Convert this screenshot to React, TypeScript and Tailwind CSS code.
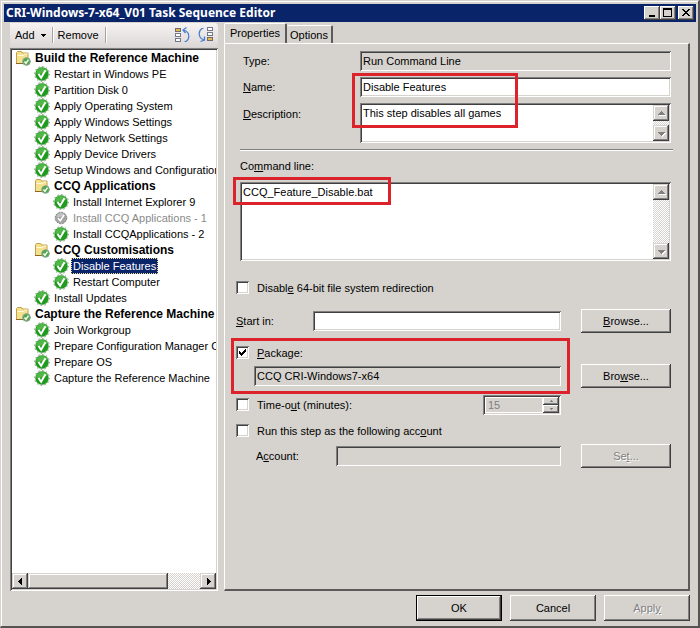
import React from "react";

const SUNKEN =
  "shadow-[inset_1px_1px_0_#808080,inset_-1px_-1px_0_#fff,inset_2px_2px_0_#404040,inset_-2px_-2px_0_#d6d3ce]";
const RAISED =
  "bg-[#d6d3ce] shadow-[inset_-1px_-1px_0_#404040,inset_1px_1px_0_#fff,inset_-2px_-2px_0_#808080]";
const SCROLL_BUTTON =
  "flex h-4 w-4 shrink-0 items-center justify-center bg-[#d6d3ce] shadow-[inset_-1px_-1px_0_#404040,inset_1px_1px_0_#d6d3ce,inset_-2px_-2px_0_#808080,inset_2px_2px_0_#fff]";
const DITHER =
  "bg-[repeating-conic-gradient(#fff_0_25%,#d6d3ce_0_50%)] bg-[length:2px_2px]";
const CAPTION_BUTTON =
  "flex h-3.5 w-4 items-center justify-center bg-[#d6d3ce] shadow-[inset_-1px_-1px_0_#404040,inset_1px_1px_0_#fff,inset_-2px_-2px_0_#808080]";

type Kind = "folder" | "ok" | "off";
type Item = { label: string; kind: Kind; depth: 0 | 1 | 2; selected?: boolean };

const ITEMS: Item[] = [
  { label: "Build the Reference Machine", kind: "folder", depth: 0 },
  { label: "Restart in Windows PE", kind: "ok", depth: 1 },
  { label: "Partition Disk 0", kind: "ok", depth: 1 },
  { label: "Apply Operating System", kind: "ok", depth: 1 },
  { label: "Apply Windows Settings", kind: "ok", depth: 1 },
  { label: "Apply Network Settings", kind: "ok", depth: 1 },
  { label: "Apply Device Drivers", kind: "ok", depth: 1 },
  { label: "Setup Windows and Configuration", kind: "ok", depth: 1 },
  { label: "CCQ Applications", kind: "folder", depth: 1 },
  { label: "Install Internet Explorer 9", kind: "ok", depth: 2 },
  { label: "Install CCQ Applications - 1", kind: "off", depth: 2 },
  { label: "Install CCQApplications - 2", kind: "ok", depth: 2 },
  { label: "CCQ Customisations", kind: "folder", depth: 1 },
  { label: "Disable Features", kind: "ok", depth: 2, selected: true },
  { label: "Restart Computer", kind: "ok", depth: 2 },
  { label: "Install Updates", kind: "ok", depth: 1 },
  { label: "Capture the Reference Machine", kind: "folder", depth: 0 },
  { label: "Join Workgroup", kind: "ok", depth: 1 },
  { label: "Prepare Configuration Manager Cli", kind: "ok", depth: 1 },
  { label: "Prepare OS", kind: "ok", depth: 1 },
  { label: "Capture the Reference Machine", kind: "ok", depth: 1 },
];

const INDENT = { 0: "pl-[3px]", 1: "pl-[22px]", 2: "pl-[41px]" };

function StatusIcon({ kind }: { kind: Kind }) {
  if (kind === "folder") {
    return (
      <svg width="16" height="16" viewBox="0 0 16 16" className="shrink-0">
        <path d="M1.500 2.500 2.500 1.500h4l1 1.500h5.500v10.500H1.500z" fill="#f5e08d" stroke="#c2a04a" />
        <path d="M2.500 5.500h6l1-1.500h3" stroke="#fffbdc" fill="none" />
        <path d="M1 13.500h12" stroke="#8a6a22" />
        <circle cx="11.500" cy="11.500" r="3.800" fill="#4fa84c" stroke="#8aa18a" />
        <path d="m9.500 11.500 1.500 1.800 2.500-3.600" stroke="#fff" strokeWidth="1.400" fill="none" />
      </svg>
    );
  }
  if (kind === "off") {
    return (
      <svg width="16" height="16" viewBox="0 0 16 16" className="shrink-0">
        <circle cx="8" cy="8" r="5.800" fill="#a3a3a3" stroke="#858585" strokeDasharray="2 1" />
        <path d="M3.500 7a4.600 4.600 0 0 1 8.500-1.500C9.500 5.500 6 8 3.500 7z" fill="#c4c4c4" />
        <path d="m5 8.200 2.300 2.600L11 5" stroke="#fff" strokeWidth="1.600" fill="none" />
      </svg>
    );
  }
  return (
    <svg width="16" height="16" viewBox="0 0 16 16" className="shrink-0">
      <circle cx="8" cy="8" r="7.500" fill="#e6efe5" stroke="#7d8a7d" strokeDasharray="1.300 2.627" />
      <circle cx="8" cy="8" r="6.700" fill="#219a20" />
      <path d="M2.300 7.500a5.800 5.800 0 0 1 11.200-1.800C10 5.500 6 9.500 2.300 7.500z" fill="#4fb848" />
      <path d="M4.500 8 7.100 11.700 11.500 4.200" stroke="#fff" strokeWidth="2" fill="none" />
    </svg>
  );
}

function Arrow({ dir, color = "#808080" }: { dir: "up" | "down" | "left" | "right"; color?: string }) {
  const shape = {
    up: "M4 2h1v1h1v1h1v1h1v1H1V5h1V4h1V3h1z",
    down: "M1 3h7v1H7v1H6v1H5v1H4V6H3V5H2V4H1z",
    left: "M6 1v7H5V7H4V6H3V5H2V4h1V3h1V2h1V1z",
    right: "M3 1v7h1V7h1V6h1V5h1V4H6V3H5V2H4V1z",
  }[dir];
  return (
    <svg width="9" height="9" viewBox="0 0 9 9" shapeRendering="crispEdges" className="overflow-visible">
      {color === "#808080" && <path d={shape} fill="#fff" transform="translate(1 1)" />}
      <path d={shape} fill={color} />
    </svg>
  );
}

function VScroll({ name }: { name: string }) {
  return (
    <div className={`flex w-4 shrink-0 flex-col justify-between ${DITHER}`}>
      <button type="button" aria-label={`Scroll ${name} up`} className={SCROLL_BUTTON}>
        <Arrow dir="up" />
      </button>
      <button type="button" aria-label={`Scroll ${name} down`} className={SCROLL_BUTTON}>
        <Arrow dir="down" />
      </button>
    </div>
  );
}

function Check({ id, checked = false }: { id: string; checked?: boolean }) {
  return (
    <span className="relative mb-0.5 block h-[13px] w-[13px] shrink-0">
      <input
        id={id}
        type="checkbox"
        defaultChecked={checked}
        className={`peer block h-[13px] w-[13px] appearance-none bg-white ${SUNKEN}`}
      />
      <svg
        width="13"
        height="13"
        viewBox="0 0 13 13"
        shapeRendering="crispEdges"
        className="pointer-events-none absolute inset-0 hidden peer-checked:block"
      >
        <path d="M3 5h1v1h1v1h1V6h1V5h1V4h1V3h1v3H9v1H8v1H7v1H6v1H5V9H4V8H3z" fill="#000" />
      </svg>
    </span>
  );
}

function Highlight({ className }: { className: string }) {
  return <div className={`pointer-events-none absolute border-3 border-[#dc232b] ${className}`} />;
}

function Toolbar() {
  return (
    <div className="flex h-6 items-center rounded-r bg-linear-to-b from-[#f6f3f2] to-[#dcd8d7] pr-1 pl-[5px]">
      <button type="button" className="flex items-center gap-1.5">
        Add
        <svg width="5" height="3" viewBox="0 0 5 3" shapeRendering="crispEdges">
          <path d="M0 0h5v1H4v1H3v1H2V2H1V1H0z" />
        </svg>
      </button>
      <span className="ml-1.5 h-4 w-0.5 border-r border-l border-r-white border-l-[#a5a2a0]" />
      <button type="button" className="ml-1">
        Remove
      </button>
      <span className="ml-1.5 h-4 w-0.5 border-r border-l border-r-white border-l-[#a5a2a0]" />
      <button type="button" aria-label="Move up" className="ml-auto">
        <svg width="16" height="16" viewBox="0 0 16 16" fill="none">
          <rect x="1.500" y="1.500" width="5" height="3" fill="#e5b84a" stroke="#6e6c70" />
          <rect x="1.500" y="6.500" width="5" height="3" fill="#fff" stroke="#74788c" />
          <rect x="1.500" y="11.500" width="5" height="3" fill="#fff" stroke="#74788c" />
          <path d="M10.500 14.500h1.500q3-2 2.800-5.500T12 4L9.500 3" stroke="#4a7fd0" strokeWidth="1.200" />
          <path d="M12.500.5 9 3l2.500 3" stroke="#4a7fd0" strokeWidth="1.300" />
        </svg>
      </button>
      <button type="button" aria-label="Move down" className="ml-2">
        <svg width="16" height="16" viewBox="0 0 16 16" fill="none">
          <rect x="9.500" y=".5" width="5" height="3" fill="#fff" stroke="#74788c" />
          <rect x="9.500" y="5.500" width="5" height="3" fill="#fff" stroke="#74788c" />
          <rect x="9.500" y="10.500" width="5" height="3" fill="#e5b84a" stroke="#6e6c70" />
          <path d="M5.500 1.500H4Q1 3.500 1.200 7T4 12l2.500 1" stroke="#4a7fd0" strokeWidth="1.200" />
          <path d="M6.500 9.500V13l-4 1.500" stroke="#4a7fd0" strokeWidth="1.300" />
        </svg>
      </button>
    </div>
  );
}

function Tree() {
  return (
    <div className={`flex min-h-0 flex-1 flex-col bg-white p-0.5 ${SUNKEN}`}>
      <ul role="tree" className="flex-1 overflow-hidden">
        {ITEMS.map((item, i) => (
          <li
            key={i}
            role="treeitem"
            aria-selected={!!item.selected}
            className={`flex h-4 items-center gap-0.5 whitespace-nowrap ${INDENT[item.depth]}`}
          >
            <StatusIcon kind={item.kind} />
            <span
              className={
                item.selected
                  ? "bg-[#0a246a] px-0.5 text-white outline-1 -outline-offset-1 outline-dotted outline-[#f5db95]"
                  : item.kind === "folder"
                    ? "px-0.5 text-xs font-bold"
                    : item.kind === "off"
                      ? "px-0.5 text-[#8a8a8a]"
                      : "px-0.5"
              }
            >
              {item.label}
            </span>
          </li>
        ))}
      </ul>
      <div className={`flex h-4 ${DITHER}`}>
        <button type="button" aria-label="Scroll left" className={SCROLL_BUTTON}>
          <Arrow dir="left" color="#000" />
        </button>
        <div className="w-[140px] bg-[#d6d3ce] shadow-[inset_-1px_-1px_0_#404040,inset_1px_1px_0_#d6d3ce,inset_-2px_-2px_0_#808080,inset_2px_2px_0_#fff]" />
        <button type="button" aria-label="Scroll right" className={`ml-auto ${SCROLL_BUTTON}`}>
          <Arrow dir="right" color="#000" />
        </button>
      </div>
    </div>
  );
}

function PropertiesForm() {
  return (
    <form
      className="flex-1 border-t border-r-2 border-b-2 border-l border-t-white border-r-[#5c5b5a] border-b-[#5c5b5a] border-l-white pt-[7px] pr-[17px] pl-[11px]"
      onSubmit={(e) => e.preventDefault()}
    >
      <div className="flex items-center pl-[7px]">
        <label htmlFor="type" className="w-[117px]">Type:</label>
        <input id="type" readOnly defaultValue="Run Command Line" className={`h-5 min-w-0 flex-1 bg-[#d6d3ce] px-[3px] ${SUNKEN}`} />
      </div>
      <div className="relative mt-1.5 flex flex-col gap-1.5 pl-[7px]">
        <div className="flex items-center">
          <label htmlFor="name" className="w-[117px]"><u>N</u>ame:</label>
          <input id="name" defaultValue="Disable Features" className={`h-5 min-w-0 flex-1 bg-white px-[3px] ${SUNKEN}`} />
        </div>
        <div className="flex items-start">
          <label htmlFor="description" className="w-[117px] pt-[3px]"><u>D</u>escription:</label>
          <div className={`flex h-10 min-w-0 flex-1 bg-white p-0.5 ${SUNKEN}`}>
            <textarea id="description" defaultValue="This step disables all games" className="min-w-0 flex-1 resize-none overflow-hidden bg-transparent px-px" />
            <VScroll name="description" />
          </div>
        </div>
        <Highlight className="-top-1 left-[116px] h-[55px] w-[166px]" />
      </div>
      <hr className="mt-1.5 -mr-0.5 ml-1 h-0.5 border-t border-b border-t-[#808080] border-b-white" />
      <div className="relative mt-[7px] pl-1">
        <label htmlFor="command" className="block">Co<u>m</u>mand line:</label>
        <div className={`mt-2 flex h-[79px] bg-white p-0.5 ${SUNKEN}`}>
          <textarea id="command" defaultValue="CCQ_Feature_Disable.bat" className="min-w-0 flex-1 resize-none overflow-hidden bg-transparent px-px" />
          <VScroll name="command line" />
        </div>
        <Highlight className="top-[19px] -left-[3px] h-7 w-[158px]" />
      </div>
      <div className="mt-[19px] flex items-center gap-2">
        <Check id="redirection" />
        <label htmlFor="redirection">Disabl<u>e</u> 64-bit file system redirection</label>
      </div>
      <div className="mt-[13px] flex items-center">
        <label htmlFor="start" className="w-[77px]"><u>S</u>tart in:</label>
        <input id="start" className={`h-5 min-w-0 flex-1 bg-white px-[3px] ${SUNKEN}`} />
        <button type="button" className={`ml-5 h-6 w-[90px] ${RAISED}`}><u>B</u>rowse...</button>
      </div>
      <div className="relative mt-3">
        <div className="flex items-center gap-2">
          <Check id="package" checked />
          <label htmlFor="package"><u>P</u>ackage:</label>
        </div>
        <div className="mt-[3px] flex items-center pl-[18px]">
          <input aria-label="Package name" readOnly defaultValue="CCQ CRI-Windows7-x64" className={`h-5 min-w-0 flex-1 bg-[#d6d3ce] px-[3px] ${SUNKEN}`} />
          <button type="button" className={`ml-5 h-6 w-[90px] ${RAISED}`}>Bro<u>w</u>se...</button>
        </div>
        <Highlight className="-top-[7px] right-[101px] h-14 -left-[5px]" />
      </div>
      <div className="mt-[7px] flex items-center gap-2 pr-[110px]">
        <Check id="timeout" />
        <label htmlFor="timeout">Time-o<u>u</u>t (minutes):</label>
        <div className={`ml-auto flex h-5 w-[78px] p-0.5 ${SUNKEN}`}>
          <input aria-label="Minutes" disabled defaultValue="15" className="min-w-0 flex-1 border border-white px-0.5 text-[#808080]" />
          <div className="flex w-4 flex-col">
            <button type="button" disabled aria-label="More minutes" className={`flex h-2 items-center justify-center ${RAISED}`}>
              <svg width="3" height="2" viewBox="0 0 3 2" shapeRendering="crispEdges"><path d="M1 0h1v1h1v1H0V1h1z" fill="#808080" /></svg>
            </button>
            <button type="button" disabled aria-label="Fewer minutes" className={`flex h-2 items-center justify-center ${RAISED}`}>
              <svg width="3" height="2" viewBox="0 0 3 2" shapeRendering="crispEdges"><path d="M0 0h3v1H2v1H1V1H0z" fill="#808080" /></svg>
            </button>
          </div>
        </div>
      </div>
      <div className="mt-2 flex items-center gap-2">
        <Check id="runas" />
        <label htmlFor="runas">Run this step as the following acc<u>o</u>unt</label>
      </div>
      <div className="mt-[5px] flex items-center pl-5">
        <label htmlFor="account" className="w-20">A<u>c</u>count:</label>
        <input id="account" disabled className={`h-5 min-w-0 flex-1 bg-[#d6d3ce] px-[3px] ${SUNKEN}`} />
        <button type="button" disabled className={`ml-5 h-6 w-[90px] text-[#808080] text-shadow-[1px_1px_0_#fff] ${RAISED}`}>Se<u>t</u>...</button>
      </div>
    </form>
  );
}

export default function App() {
  return (
    <div className="flex min-h-screen flex-col border-t border-r-2 border-b-2 border-l border-t-[#d6d3ce] border-r-[#555453] border-b-[#555453] border-l-[#d6d3ce] bg-[#d6d3ce] font-['Liberation_Sans',Arial,sans-serif] text-[11px] leading-4 text-black">
      <div className="flex flex-1 flex-col border-t border-l border-white px-0.5 pt-0.5">
        <header className="flex h-[18px] items-center bg-[#0a246a] pr-0.5 pl-0.5">
          <h1 className="flex-1 truncate font-['Noto_Sans','Open_Sans',sans-serif] text-xs leading-4 font-bold text-white">
            CRI-Windows-7-x64_V01 Task Sequence Editor
          </h1>
          <button type="button" aria-label="Minimize" className={CAPTION_BUTTON}>
            <svg width="10" height="10" viewBox="0 0 10 10" shapeRendering="crispEdges"><path d="M2 7h6v2H2z" /></svg>
          </button>
          <button type="button" aria-label="Maximize" className={CAPTION_BUTTON}>
            <svg width="10" height="10" viewBox="0 0 10 10" shapeRendering="crispEdges"><path d="M0 0h9v9H0zM1 2v6h7V2z" fillRule="evenodd" /></svg>
          </button>
          <button type="button" aria-label="Close" className={`ml-0.5 ${CAPTION_BUTTON}`}>
            <svg width="10" height="10" viewBox="0 0 10 10" shapeRendering="crispEdges"><path d="M1 1h2v1h1v1h2V2h1V1h2v1H8v1H7v1H6v1h1v1h1v1h1v1H7V7H6V6H4v1H3v1H1V7h1V6h1V5h1V4H3V3H2V2H1z" /></svg>
          </button>
        </header>
        <main className="flex flex-1 gap-1.5 px-1.5 pt-px">
          <section className="flex w-[208px] shrink-0 flex-col gap-px">
            <Toolbar />
            <Tree />
          </section>
          <section className="flex min-w-0 flex-1 flex-col">
            <div role="tablist" className="flex h-5 items-end">
              <button type="button" role="tab" aria-selected="true" className="-mb-px h-[21px] w-[63px] rounded-t-xs border-t border-r-2 border-l border-t-white border-r-[#5c5b5a] border-l-white bg-[#d6d3ce] pb-0.5">
                Properties
              </button>
              <button type="button" role="tab" aria-selected="false" className="h-[18px] w-[46px] rounded-t-xs border-t border-r-2 border-t-white border-r-[#5c5b5a]">
                Options
              </button>
            </div>
            <PropertiesForm />
          </section>
        </main>
        <footer className="flex h-[35px] items-start justify-end gap-2 px-1.5 pt-1">
          <button type="button" className="h-[26px] w-[86px] border border-black bg-[#d6d3ce] shadow-[inset_-1px_-1px_0_#404040,inset_1px_1px_0_#fff,inset_-2px_-2px_0_#808080]">OK</button>
          <button type="button" className={`h-[26px] w-[86px] ${RAISED}`}>Cancel</button>
          <button type="button" disabled className={`h-[26px] w-[86px] text-[#808080] text-shadow-[1px_1px_0_#fff] ${RAISED}`}>Appl<u>y</u></button>
        </footer>
      </div>
    </div>
  );
}
